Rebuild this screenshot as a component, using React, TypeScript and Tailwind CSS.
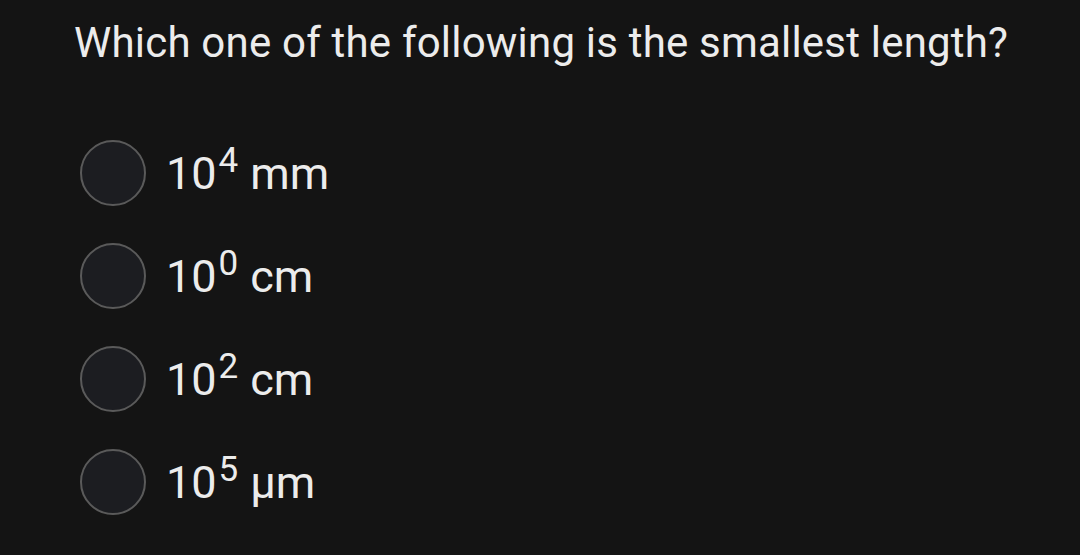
import React from "react";

const options = [
  { exp: "4", unit: "mm" },
  { exp: "0", unit: "cm" },
  { exp: "2", unit: "cm" },
  { exp: "5", unit: "μm" },
];

export default function App() {
  return (
    <div
      className="w-[1080px] h-[555px] bg-[#141414] text-[#ececec] overflow-hidden"
      style={{ fontFamily: "Roboto, 'Noto Sans', sans-serif" }}
    >
      <div className="pl-[74px] pt-[19px] text-[42px] leading-[48px] tracking-[0.2px] whitespace-nowrap">
        Which one of the following is the smallest length?
      </div>
      <div className="flex flex-col gap-[37px] pl-[80px] pt-[73px]">
        {options.map((o, i) => (
          <div key={i} className="flex items-center h-[66px]">
            <div className="w-[66px] h-[66px] rounded-full bg-[#1c1d21] border-2 border-[#5a5a5a] shrink-0" />
            <div className="ml-[20px] text-[45px] leading-none flex items-baseline">
              <span>10</span>
              <span className="text-[35px] relative -top-[17px] ml-[2px]">{o.exp}</span>
              <span className="ml-[12px]">{o.unit}</span>
            </div>
          </div>
        ))}
      </div>
    </div>
  );
}
